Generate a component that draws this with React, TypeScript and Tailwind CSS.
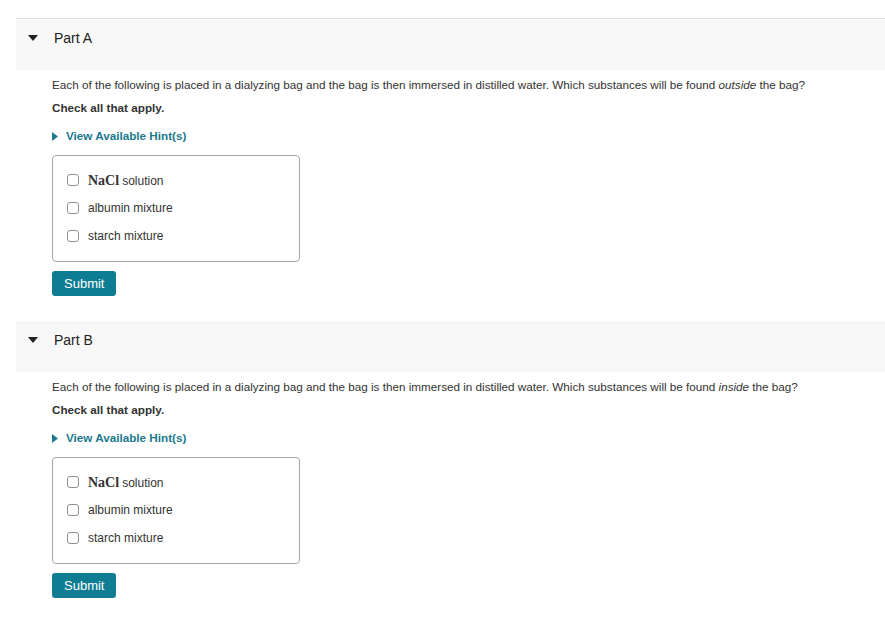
import React from 'react';

const font = { fontFamily: '"Liberation Sans", Arial, sans-serif' };

function Caret({ open }: { open: boolean }) {
  return open ? (
    <svg width="10" height="6" viewBox="0 0 10 6" className="fill-[#222]">
      <path d="M0 0h10L5 6z" />
    </svg>
  ) : (
    <svg width="6" height="9" viewBox="0 0 6 9" className="fill-[#1b7a8e]">
      <path d="M0 0v9l6-4.5z" />
    </svg>
  );
}

function Part({ label, where }: { label: string; where: string }) {
  const options = ['solution', 'albumin mixture', 'starch mixture'];
  return (
    <section>
      <div className="flex h-[51px] items-start bg-[#f8f8f8] pt-[10px] pl-[12px]">
        <div className="flex h-[18px] items-center">
          <Caret open />
        </div>
        <span className="ml-[16px] text-[14px] leading-[18px] text-[#222]">Part {label}</span>
      </div>
      <div className="pl-[36px] pt-[6px] text-[11.7px] text-[#333]">
        <p className="leading-[17px]">
          Each of the following is placed in a dialyzing bag and the bag is then immersed in distilled water. Which
          substances will be found <i>{where}</i> the bag?
        </p>
        <p className="mt-[6px] font-bold leading-[17px]">Check all that apply.</p>
        <button className="mt-[11px] flex items-center gap-[8px] font-bold leading-[18px] text-[#1b7a8e]">
          <Caret open={false} />
          View Available Hint(s)
        </button>
        <div className="mt-[10px] w-[248px] rounded-[4px] border border-[#a6a6a6] pt-[10px] pb-[11px] pl-[14px]">
          {options.map((o, i) => (
            <label key={o} className="flex h-[28px] items-center">
              <span className="h-[12px] w-[12px] rounded-[3px] border border-[#8f8f8f] bg-white" />
              <span className="ml-[9px] text-[12px] text-[#333]">
                {i === 0 && (
                  <span
                    className="mr-[3px] text-[14px] font-bold text-[#333]"
                    style={{ fontFamily: '"Liberation Serif", serif' }}
                  >
                    NaCl
                  </span>
                )}
                {o}
              </span>
            </label>
          ))}
        </div>
        <button className="mt-[9px] h-[25px] rounded-[3px] bg-[#0e7c92] px-[12px] text-[13px] text-white">
          Submit
        </button>
      </div>
    </section>
  );
}

export default function App() {
  return (
    <div className="min-h-[623px] bg-white pt-[18px] pl-[16px]" style={font}>
      <div className="border-t border-[#e0e0e0]">
        <Part label="A" where="outside" />
        <div className="h-[25px]" />
        <Part label="B" where="inside" />
      </div>
    </div>
  );
}
